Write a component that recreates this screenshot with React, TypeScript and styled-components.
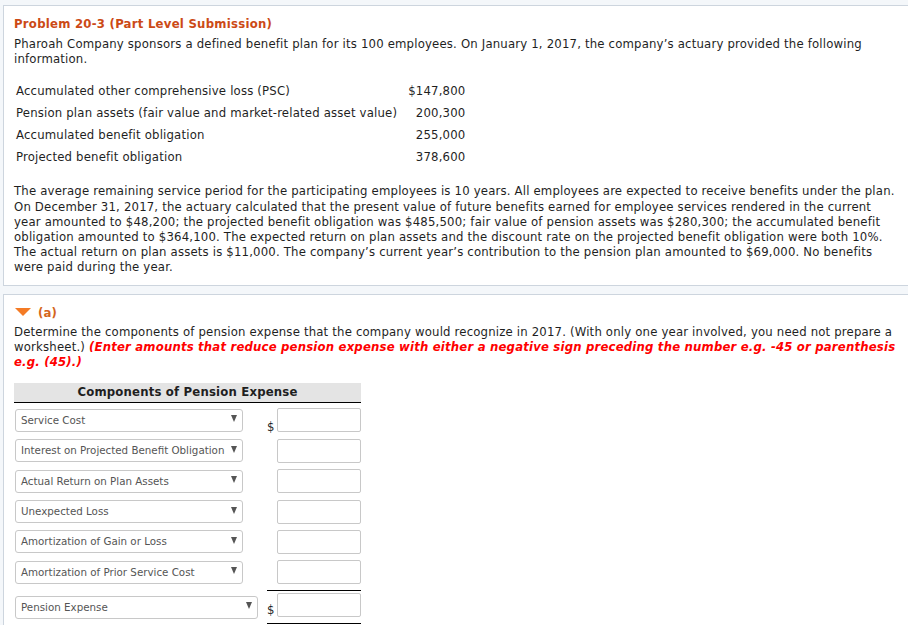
import * as React from 'react';
import styled, { createGlobalStyle } from 'styled-components';

const GlobalStyle = createGlobalStyle`
  html, body {
    margin: 0;
    padding: 0;
    background: #f4f7fa;
  }
  body {
    font-family: 'DejaVu Sans Condensed', 'DejaVu Sans', Verdana, sans-serif;
    font-stretch: condensed;
    font-size: 13px;
    letter-spacing: 0.18px;
    color: #1f1f1f;
  }
`;

const Page = styled.div`
  padding: 5px 0 0 3px;
  overflow: hidden;
  height: 620px;
`;

const Panel = styled.section`
  background: #fff;
  border: 1px solid #cdd5de;
  border-right: none;
  padding: 10px 0 10px 10px;
  margin-bottom: 8px;
  width: 896px;
`;

const Title = styled.h2`
  margin: 0 0 5px;
  font-size: 13px;
  font-weight: bold;
  letter-spacing: 0.25px;
  color: #cc4a16;
  line-height: 15px;
`;

const Text = styled.p`
  margin: 0;
  line-height: 15.2px;
  width: 882px;
`;

const Note = styled.em`
  color: #f00;
  font-weight: bold;
`;

const DataTable = styled.table`
  border-collapse: collapse;
  margin: 13px 0 16px 1px;

  td {
    height: 22px;
    padding: 0 1px;
    white-space: nowrap;
  }
  td:last-child {
    text-align: right;
    padding-left: 10px;
  }
`;

const PartHead = styled.div`
  display: flex;
  align-items: center;
  gap: 7px;
  margin: 0 0 4px 1px;
  font-weight: bold;
  color: #d4661c;
  line-height: 15px;
`;

const Caret = styled.span`
  width: 0;
  height: 0;
  border-left: 8px solid transparent;
  border-right: 8px solid transparent;
  border-top: 8px solid #f47b25;
`;

const Components = styled.div`
  margin-top: 14px;
  width: 347px;
`;

const ComponentsHead = styled.div`
  background: #e4e4e4;
  border-bottom: 1px solid #000;
  text-align: center;
  font-weight: bold;
  height: 19px;
  line-height: 18px;
  margin-bottom: 2px;
`;

const Row = styled.div<{ $total?: boolean }>`
  display: flex;
  align-items: ${(p) => (p.$total ? 'flex-start' : 'center')};
  height: ${(p) => (p.$total ? 'auto' : '30.4px')};

  & > * {
    flex-shrink: 0;
  }
`;

const SelectBox = styled.div<{ $wide?: boolean }>`
  box-sizing: border-box;
  width: ${(p) => (p.$wide ? '243px' : '228px')};
  height: 23px;
  margin: ${(p) => (p.$wide ? '8px 9px 0 1px' : '0 10px 0 1px')};
  border: 1px solid #c8c8c8;
  border-radius: 3px;
  background: #fff;
  display: flex;
  align-items: center;
  justify-content: space-between;
  padding: 0 5px 1px 5px;
  font-family: 'DejaVu Sans', Verdana, sans-serif;
  font-stretch: normal;
  font-size: 10.3px;
  letter-spacing: 0;
  color: #555;
  white-space: nowrap;
`;

const Arrow = styled.span`
  width: 0;
  height: 0;
  border-left: 3.5px solid transparent;
  border-right: 3.5px solid transparent;
  border-top: 7px solid #555;
  margin-top: -2px;
`;

const Dollar = styled.span`
  align-self: flex-end;
  width: 10px;
  margin-left: 14px;
  font-size: 13px;
  line-height: 14px;
  margin-bottom: 2px;
`;

const DollarTotal = styled(Dollar)`
  margin-bottom: 9px;
  margin-left: 0;
  width: 10px;
`;

const Gap = styled.span`
  width: 24px;
`;

const TotalCell = styled.div`
  box-sizing: border-box;
  width: 94px;
  margin-left: -10px;
  margin-top: 2px;
  padding: 2px 0 6px 10px;
  border-top: 1px solid #000;
  border-bottom: 3px double #000;
`;

const Amount = styled.input`
  box-sizing: border-box;
  display: block;
  width: 84px;
  height: 24px;
  border: 1px solid #c8c8c8;
  border-radius: 2px;
  background: #fff;
  margin: 0;
`;

const facts = [
  ['Accumulated other comprehensive loss (PSC)', '$147,800'],
  ['Pension plan assets (fair value and market-related asset value)', '200,300'],
  ['Accumulated benefit obligation', '255,000'],
  ['Projected benefit obligation', '378,600'],
];

const components = [
  'Service Cost',
  'Interest on Projected Benefit Obligation',
  'Actual Return on Plan Assets',
  'Unexpected Loss',
  'Amortization of Gain or Loss',
  'Amortization of Prior Service Cost',
];

export default function App() {
  return (
    <>
      <GlobalStyle />
      <Page>
        <Panel>
          <Title>Problem 20-3 (Part Level Submission)</Title>
          <Text>
            Pharoah Company sponsors a defined benefit plan for its 100 employees. On January 1, 2017, the
            company’s actuary provided the following information.
          </Text>
          <DataTable>
            <tbody>
              {facts.map(([label, value]) => (
                <tr key={label}>
                  <td>{label}</td>
                  <td>{value}</td>
                </tr>
              ))}
            </tbody>
          </DataTable>
          <Text>
            The average remaining service period for the participating employees is 10 years. All employees are
            expected to receive benefits under the plan. On December 31, 2017, the actuary calculated that the
            present value of future benefits earned for employee services rendered in the current year amounted to
            $48,200; the projected benefit obligation was $485,500; fair value of pension assets was $280,300; the
            accumulated benefit obligation amounted to $364,100. The expected return on plan assets and the
            discount rate on the projected benefit obligation were both 10%. The actual return on plan assets is
            $11,000. The company’s current year’s contribution to the pension plan amounted to $69,000. No
            benefits were paid during the year.
          </Text>
        </Panel>
        <Panel>
          <PartHead>
            <Caret />
            (a)
          </PartHead>
          <Text>
            Determine the components of pension expense that the company would recognize in 2017. (With only one
            year involved, you need not prepare a worksheet.){' '}
            <Note>
              (Enter amounts that reduce pension expense with either a negative sign preceding the number e.g. -45
              or parenthesis e.g. (45).)
            </Note>
          </Text>
          <Components>
            <ComponentsHead>Components of Pension Expense</ComponentsHead>
            {components.map((name, i) => (
              <Row key={name}>
                <SelectBox>
                  {name}
                  <Arrow />
                </SelectBox>
                {i === 0 ? <Dollar>$</Dollar> : <Gap />}
                <Amount />
              </Row>
            ))}
            <Row $total>
              <SelectBox $wide>
                Pension Expense
                <Arrow />
              </SelectBox>
              <DollarTotal>$</DollarTotal>
              <TotalCell>
                <Amount />
              </TotalCell>
            </Row>
          </Components>
        </Panel>
      </Page>
    </>
  );
}
